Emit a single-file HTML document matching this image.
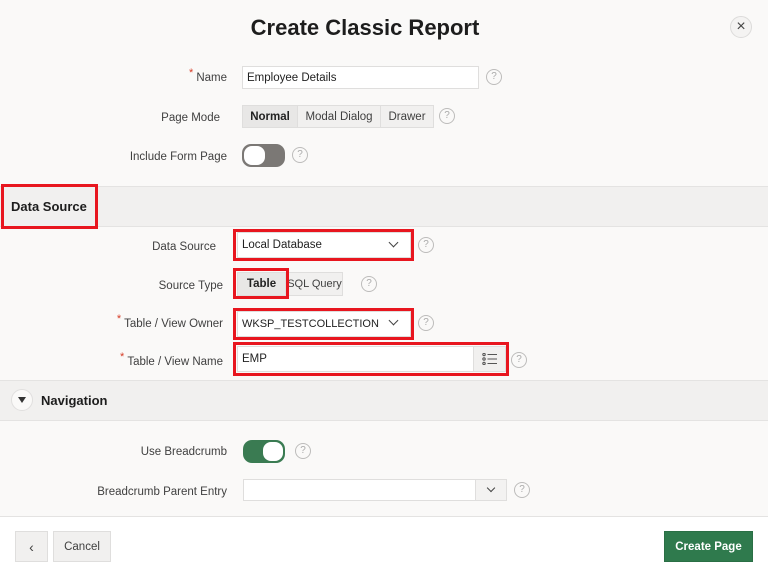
<!DOCTYPE html>
<html><head><meta charset="utf-8"><style>
*{box-sizing:border-box;margin:0;padding:0}
body{width:768px;height:576px;overflow:hidden;background:#faf9f8;font-family:"Liberation Sans",sans-serif;position:relative;color:#262626}
.a{position:absolute}
.lbl{position:absolute;font-size:11.5px;color:#404040;text-align:right;white-space:nowrap;margin-top:2px}
.req{color:#d63b25;font-size:11px;position:relative;top:-5px;margin-right:3px}
.inp{position:absolute;background:#fff;border:1px solid #dfdedd;font-size:11.5px;padding-left:4px;display:flex;align-items:center;white-space:nowrap}
.help{position:absolute;width:16px;height:16px;border:1px solid #bdbcbb;border-radius:50%;font-size:10px;color:#aaa;text-align:center;line-height:14px}
.btn{position:absolute;background:#f1f0ef;border:1px solid #dfdedd;font-size:11.5px;display:flex;align-items:center;justify-content:center;color:#404040;white-space:nowrap}
.red{position:absolute;border:3px solid #e8161f}
.band{position:absolute;left:0;width:768px;background:#f1f0ef;border-top:1px solid #e4e3e2;border-bottom:1px solid #e4e3e2}
.chev{position:absolute;width:7px;height:7px;border-right:1.3px solid #444;border-bottom:1.3px solid #444;transform:rotate(45deg)}
</style></head><body>
<div class="a" style="left:0;top:0;width:768px;height:52px;background:#faf9f8"></div>
<div class="a" style="left:0;top:15px;width:730px;text-align:center;font-size:22px;font-weight:bold;color:#1d1d1d">Create Classic Report</div>
<div class="a" style="left:730px;top:16px;width:22px;height:22px;border-radius:50%;border:1px solid #dcdbda;background:#f4f3f2;text-align:center;line-height:19px;font-size:16px;color:#444">×</div>

<div class="lbl" style="right:541px;top:70px"><span class="req">*</span>Name</div>
<div class="inp" style="left:242px;top:66px;width:237px;height:23px;color:#222">Employee Details</div>
<div class="help" style="left:486px;top:69px">?</div>

<div class="lbl" style="right:548px;top:110px">Page Mode</div>
<div class="btn" style="left:242px;top:105px;width:56px;height:23px;background:#e8e7e6;font-weight:bold;color:#222">Normal</div>
<div class="btn" style="left:297px;top:105px;width:84px;height:23px">Modal Dialog</div>
<div class="btn" style="left:380px;top:105px;width:54px;height:23px">Drawer</div>
<div class="help" style="left:439px;top:108px">?</div>

<div class="lbl" style="right:541px;top:149px">Include Form Page</div>
<div class="a" style="left:242px;top:144px;width:43px;height:23px;border-radius:9px;background:#7b7875"></div>
<div class="a" style="left:244px;top:146px;width:21px;height:19px;border-radius:8px;background:#fff"></div>
<div class="help" style="left:292px;top:147px">?</div>

<div class="band" style="top:186px;height:41px"></div>
<div class="red" style="left:1px;top:184px;width:97px;height:45px"></div>
<div class="a" style="left:11px;top:199px;font-size:13px;font-weight:bold;color:#1d1d1d">Data Source</div>

<div class="lbl" style="right:552px;top:239px">Data Source</div>
<div class="inp" style="left:237px;top:232px;width:174px;height:26px;color:#222">Local Database</div>
<div class="chev" style="left:390px;top:239px"></div>
<div class="red" style="left:233px;top:229px;width:181px;height:32px"></div>
<div class="help" style="left:418px;top:237px">?</div>

<div class="lbl" style="right:545px;top:278px">Source Type</div>
<div class="btn" style="left:237px;top:272px;width:49px;height:24px;background:#e8e7e6;font-weight:bold;color:#222">Table</div>
<div class="btn" style="left:286px;top:272px;width:57px;height:24px;font-size:11px">SQL Query</div>
<div class="red" style="left:233px;top:268px;width:56px;height:31px"></div>
<div class="help" style="left:361px;top:276px">?</div>

<div class="lbl" style="right:545px;top:316px"><span class="req">*</span>Table / View Owner</div>
<div class="inp" style="left:237px;top:311px;width:174px;height:26px;color:#222;font-size:11px">WKSP_TESTCOLLECTION</div>
<div class="chev" style="left:390px;top:317px"></div>
<div class="red" style="left:233px;top:308px;width:181px;height:32px"></div>
<div class="help" style="left:418px;top:315px">?</div>

<div class="lbl" style="right:545px;top:354px"><span class="req">*</span>Table / View Name</div>
<div class="inp" style="left:237px;top:346px;width:237px;height:26px;color:#222">EMP</div>
<div class="btn" style="left:473px;top:346px;width:33px;height:26px;background:#f1f0ef">
<svg width="16" height="12" viewBox="0 0 16 12"><g fill="none" stroke="#555" stroke-width="1.1"><circle cx="2" cy="1.5" r="1.2"/><circle cx="2" cy="6" r="1.2"/><circle cx="2" cy="10.5" r="1.2"/><path d="M5.5 1.5H15M5.5 6H15M5.5 10.5H15"/></g></svg></div>
<div class="red" style="left:233px;top:342px;width:276px;height:34px"></div>
<div class="help" style="left:511px;top:352px">?</div>

<div class="band" style="top:380px;height:41px"></div>
<div class="a" style="left:11px;top:389px;width:22px;height:22px;border-radius:50%;background:#faf9f8;border:1px solid #e0dfde"></div>
<svg class="a" style="left:17px;top:396px" width="10" height="8"><path d="M1 1H9L5 7Z" fill="#333"/></svg>
<div class="a" style="left:41px;top:393px;font-size:13px;font-weight:bold;color:#1d1d1d">Navigation</div>

<div class="lbl" style="right:541px;top:444px">Use Breadcrumb</div>
<div class="a" style="left:243px;top:440px;width:42px;height:23px;border-radius:9px;background:#3a7b52"></div>
<div class="a" style="left:263px;top:442px;width:20px;height:19px;border-radius:8px;background:#fff"></div>
<div class="help" style="left:295px;top:443px">?</div>

<div class="lbl" style="right:541px;top:484px">Breadcrumb Parent Entry</div>
<div class="inp" style="left:243px;top:479px;width:233px;height:22px"></div>
<div class="btn" style="left:475px;top:479px;width:32px;height:22px;background:#f3f2f1"><div class="chev" style="position:relative;left:0;top:-2px;width:6px;height:6px"></div></div>
<div class="help" style="left:514px;top:482px">?</div>

<div class="a" style="left:0;top:516px;width:768px;height:60px;background:#fff;border-top:1px solid #e4e3e2"></div>
<div class="btn" style="left:15px;top:531px;width:33px;height:31px;font-size:14px">‹</div>
<div class="btn" style="left:53px;top:531px;width:58px;height:31px">Cancel</div>
<div class="btn" style="left:664px;top:531px;width:89px;height:31px;background:#2f7a4d;border-color:#2a6f45;color:#fff;font-weight:bold">Create Page</div>
</body></html>
